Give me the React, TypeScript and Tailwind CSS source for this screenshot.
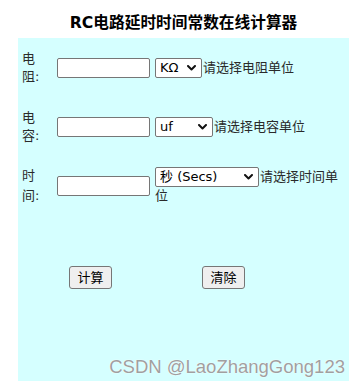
import React from "react";

const font = { fontFamily: '"DejaVu Sans", "Noto Sans CJK SC", sans-serif' };

function Chevron() {
  return (
    <svg
      width="9"
      height="6"
      viewBox="0 0 9 6"
      className="pointer-events-none absolute right-[6px] top-1/2 -translate-y-1/2"
    >
      <path d="M1 1 L4.5 4.5 L8 1" fill="none" stroke="#111" strokeWidth="2" strokeLinecap="round" strokeLinejoin="round" />
    </svg>
  );
}

function Select({ w, options }: { w: string; options: string[] }) {
  return (
    <span className={`relative inline-block align-middle ${w}`}>
      <select
        className="block h-[20px] w-full appearance-none rounded-[2px] border border-[#767676] bg-white pl-[4px] text-[13px] leading-[18px] text-black outline-none"
        style={font}
        defaultValue={options[0]}
      >
        {options.map((o) => (
          <option key={o}>{o}</option>
        ))}
      </select>
      <Chevron />
    </span>
  );
}

function Input() {
  return (
    <input
      type="text"
      className="block h-[20px] w-[93px] shrink-0 rounded-[2px] border border-[#767676] bg-white outline-none"
    />
  );
}

export default function App() {
  return (
    <div className="h-[388px] w-[362px] bg-white text-[#2a2a2a]" style={font}>
      <div className="relative ml-[18px] w-[331px]">
        <div className="flex h-[38px] items-center justify-center pt-[7px] text-[15.7px] font-bold text-black">
          RC电路延时时间常数在线计算器
        </div>
        <div className="h-[343px] bg-[#d5ffff] text-[13px] leading-[18px]">
          <div className="flex h-[59px] items-center pl-[4px]">
            <div className="w-[35px] shrink-0">
              电<br />阻:
            </div>
            <Input />
            <div className="ml-[5px] flex items-center">
              <Select w="w-[47px]" options={["KΩ", "Ω", "MΩ"]} />
              <span className="ml-[1px]">请选择电阻单位</span>
            </div>
          </div>
          <div className="flex h-[59px] items-center pl-[4px]">
            <div className="w-[35px] shrink-0">
              电<br />容:
            </div>
            <Input />
            <div className="ml-[5px] flex items-center">
              <Select w="w-[58px]" options={["uf", "nf", "pf"]} />
              <span className="ml-[1px]">请选择电容单位</span>
            </div>
          </div>
          <div className="flex h-[59px] items-center pl-[4px]">
            <div className="w-[35px] shrink-0 leading-[20px]">
              时<br />间:
            </div>
            <Input />
            <div className="ml-[5px]">
              <div className="flex items-center">
                <Select w="w-[104px]" options={["秒 (Secs)", "毫秒 (ms)", "微秒 (us)"]} />
                <span className="ml-[1px]">请选择时间单</span>
              </div>
              <div>位</div>
            </div>
          </div>
          <div className="mt-[51px] flex pl-[51px]">
            <button className="h-[23px] w-[43px] rounded-[3px] border border-[#767676] bg-[#efefef] text-[13px] text-black" style={font}>
              计算
            </button>
            <button className="ml-[90px] h-[23px] w-[43px] rounded-[3px] border border-[#767676] bg-[#efefef] text-[13px] text-black" style={font}>
              清除
            </button>
          </div>
        </div>
        <div
          className="absolute right-[4px] top-[355px] text-[18.5px] leading-[24px] text-[#a0a0a0]"
          style={{ fontFamily: '"Liberation Sans", sans-serif', textShadow: "0 0 1px #fff, 0 0 1px #fff" }}
        >
          CSDN @LaoZhangGong123
        </div>
      </div>
    </div>
  );
}
